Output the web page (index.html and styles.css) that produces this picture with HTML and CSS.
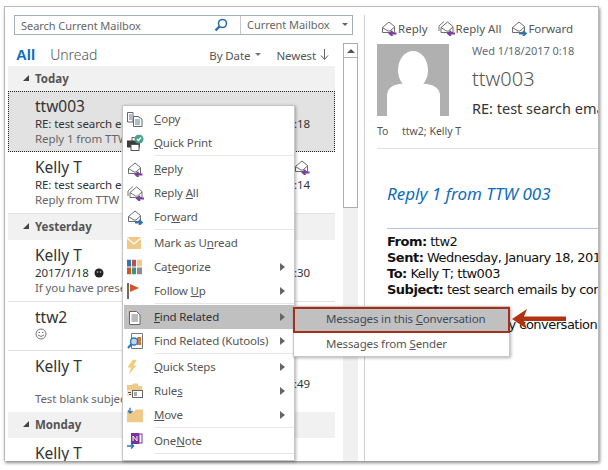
FILE: index.html
```html
<!DOCTYPE html>
<html lang="en">
<head>
<meta charset="utf-8">
<title>Outlook</title>
<link rel="stylesheet" href="styles.css">
</head>
<body>
<svg class="defs" width="0" height="0">
  <defs>
    <symbol id="env" viewBox="0 0 16 16"><path d="M1.500 7.500 L8 2 L13.500 6.500 V12.500 H1.500 Z M1.500 7.500 L7 11 H9 L13.500 7" fill="none" stroke="#6d6d6d" stroke-width="1"/></symbol>
    <symbol id="back" viewBox="0 0 16 16"><path d="M15.500 13.500 H9 M11.500 11 L8.500 13.500 L11.500 16" fill="none" stroke="#7b3f9e" stroke-width="1.800"/></symbol>
    <symbol id="fwd" viewBox="0 0 16 16"><path d="M8 13.500 H14.500 M12 11 L15 13.500 L12 16" fill="none" stroke="#2e75b6" stroke-width="1.800"/></symbol>
  </defs>
</svg>
<div class="window">
  <div class="left">
    <div class="search">
      <span class="search-text">Search Current Mailbox</span>
      <svg class="lens" width="14" height="14" viewBox="0 0 14 14"><circle cx="8.500" cy="5.500" r="4" fill="none" stroke="#2b6ea8" stroke-width="1.600"/><path d="M5.500 8.500 L1.500 12.500" stroke="#2b6ea8" stroke-width="2.400"/></svg>
      <span class="scope">Current Mailbox</span>
      <span class="scope-caret"></span>
    </div>
    <div class="body">
      <div class="list">
        <div class="filters">
          <span class="all">All</span>
          <span class="unread">Unread</span>
          <span class="sort bydate">By Date</span>
          <span class="caret"></span>
          <span class="sort newest">Newest</span>
          <svg class="down" width="9" height="12" viewBox="0 0 9 12"><path d="M4.500 0 V10 M1 6.500 L4.500 10.500 L8 6.500" fill="none" stroke="#666" stroke-width="1"/></svg>
        </div>
        <div class="group first"><span class="tri"></span>Today</div>
        <div class="row selected">
          <div class="name">ttw003</div>
          <div class="subj"><span>RE: test search emails by conversation</span><span>0:18</span></div>
          <div class="prev">Reply 1 from TTW 003</div>
        </div>
        <div class="row">
          <svg class="row-icon" width="16" height="16"><use href="#env"/><use href="#back"/></svg>
          <div class="name">Kelly T</div>
          <div class="subj"><span>RE: test search emails by conversation</span><span>0:14</span></div>
          <div class="prev">Reply from TTW 1</div>
        </div>
        <div class="group"><span class="tri"></span>Yesterday</div>
        <div class="row">
          <div class="name">Kelly T</div>
          <div class="subj"><span>2017/1/18 <svg class="face" width="10" height="10" viewBox="0 0 10 10"><circle cx="5" cy="5" r="4.500" fill="#222"/><circle cx="3.500" cy="4" r=".8" fill="#ccc"/><circle cx="6.500" cy="4" r=".8" fill="#ccc"/></svg></span><span>0:30</span></div>
          <div class="prev">If you have present</div>
        </div>
        <div class="row short">
          <div class="name">ttw2</div>
          <div class="subj"><svg class="smile" width="12" height="12" viewBox="0 0 12 12"><circle cx="6" cy="6" r="5" fill="none" stroke="#777"/><path d="M3 7 Q6 10 9 7 M3.500 4.500 H5 M7 4.500 H8.500" fill="none" stroke="#777"/></svg></div>
        </div>
        <div class="row tall">
          <div class="name">Kelly T</div>
          <div class="subj"><span>&nbsp;</span><span>0:49</span></div>
          <div class="prev">Test blank subject</div>
        </div>
        <div class="group"><span class="tri"></span>Monday</div>
        <div class="row">
          <div class="name">Kelly T</div>
        </div>
      </div>
      <div class="scrollbar">
        <div class="sb-up"><span></span></div>
        <div class="sb-thumb"></div>
      </div>
    </div>
  </div>
  <div class="pane">
    <div class="actions">
      <span class="action"><svg width="16" height="16"><use href="#env"/><use href="#back"/></svg>Reply</span>
      <span class="action"><svg width="17" height="16" viewBox="0 0 17 16"><path d="M1 6 L6 1.500 M1 6 V11" fill="none" stroke="#777"/><use href="#env" x="1"/><use href="#back" x="1"/></svg>Reply All</span>
      <span class="action"><svg width="16" height="16"><use href="#env"/><use href="#fwd"/></svg>Forward</span>
    </div>
    <div class="head">
      <svg class="avatar" width="72" height="72" viewBox="0 0 72 72"><rect width="72" height="72" fill="#b0b0b0"/><ellipse cx="36" cy="26" rx="15" ry="19" fill="#fff"/><path d="M10 72 V52 Q10 42 22 40 Q28 39 30 42 Q36 45 42 42 Q44 39 50 40 Q63 42 63 52 V72 Z" fill="#fff"/></svg>
      <div class="meta">
        <div class="date">Wed 1/18/2017 0:18</div>
        <div class="sender">ttw003</div>
        <div class="subject">RE: test search emails by conversation</div>
      </div>
    </div>
    <div class="to"><span class="to-label">To</span>ttw2; Kelly T</div>
    <div class="mail">
      <div class="greeting">Reply 1 from TTW 003</div>
      <div class="quoted">
        <div><b>From:</b> ttw2</div>
        <div><b>Sent:</b> Wednesday, January 18, 2017 0:18</div>
        <div><b>To:</b> Kelly T; ttw003</div>
        <div><b>Subject:</b> test search emails by conversation</div>
        <div class="quoted-body">test search emails by conversation</div>
      </div>
    </div>
  </div>

  <div class="menu">
    <div class="item">
      <svg class="ico" width="16" height="16" viewBox="0 0 16 16"><path d="M.5 1.500 H6 V11 H.5 Z M6.500 5.500 H11 L15 8 V15.500 H6.500 Z" fill="#fff" stroke="#666"/><path d="M2 4 H5 M2 6 H5 M2 8 H5 M8 9 H13 M8 11 H13 M8 13 H13" stroke="#4a7fb5"/></svg>
      <span><u>C</u>opy</span>
    </div>
    <div class="item">
      <svg class="ico" width="17" height="17" viewBox="0 0 17 17"><rect x="5" y="3" width="7" height="5" fill="#fff" stroke="#666"/><rect x="0" y="6" width="13" height="7" fill="#3c3c3c"/><rect x="4" y="10" width="8" height="6" fill="#fff" stroke="#555"/><circle cx="12" cy="4.500" r="4.500" fill="#4aa38a"/><path d="M10 4.500 L11.500 6 L14 3" fill="none" stroke="#fff" stroke-width="1.200"/></svg>
      <span><u>Q</u>uick Print</span>
    </div>
    <div class="sep"></div>
    <div class="item">
      <svg class="ico" width="16" height="16"><use href="#env"/><use href="#back"/></svg>
      <span><u>R</u>eply</span>
    </div>
    <div class="item">
      <svg class="ico" width="17" height="16" viewBox="0 0 17 16"><path d="M1 6 L6 1.500 M1 6 V11" fill="none" stroke="#777"/><use href="#env" x="1"/><use href="#back" x="1"/></svg>
      <span>Reply <u>A</u>ll</span>
    </div>
    <div class="item">
      <svg class="ico" width="16" height="16"><use href="#env"/><use href="#fwd"/></svg>
      <span>For<u>w</u>ard</span>
    </div>
    <div class="sep"></div>
    <div class="item">
      <svg class="ico" width="14" height="12" viewBox="0 0 14 12"><rect width="14" height="12" fill="#efc987"/><path d="M0 1 L7 7 L14 1" fill="none" stroke="#fff" stroke-width="1.200"/></svg>
      <span>Mark as U<u>n</u>read</span>
    </div>
    <div class="item">
      <svg class="ico" width="15" height="15" viewBox="0 0 15 15"><rect width="4" height="7" fill="#2e75b6"/><rect x="5" width="4" height="7" fill="#c0504d"/><rect x="10" width="5" height="7" fill="#efc987"/><rect y="8" width="4" height="7" fill="#c8572a"/><rect x="5" y="8" width="4" height="7" fill="#3f9478"/><rect x="10" y="8" width="5" height="7" fill="#8c8c8c"/></svg>
      <span>Ca<u>t</u>egorize</span>
      <i class="more"></i>
    </div>
    <div class="item">
      <svg class="ico" width="13" height="16" viewBox="0 0 13 16"><rect width="2" height="16" fill="#6b6b6b"/><path d="M3 1 L12 5 L3 9 Z" fill="#d0562a"/></svg>
      <span>Follow <u>U</u>p</span>
      <i class="more"></i>
    </div>
    <div class="sep"></div>
    <div class="item active">
      <svg class="ico" width="14" height="16" viewBox="0 0 14 16"><path d="M0 .5 H4 M.5 .5 V7" stroke="#efc987" fill="none"/><path d="M2.500 2.500 H9.500 L13 6 V15.500 H2.500 Z" fill="#fff" stroke="#666"/><path d="M4.500 6 H11 M4.500 8 H11 M4.500 10 H11 M4.500 12 H11" stroke="#777"/></svg>
      <span><u>F</u>ind Related</span>
      <i class="more"></i>
    </div>
    <div class="item">
      <svg class="ico" width="16" height="16" viewBox="0 0 16 16"><path d="M4.500 .5 H15.500 V15.500 H4.500 Z" fill="#fff" stroke="#777"/><rect x="10" y="4" width="4" height="8" fill="#d0793f"/><circle cx="7" cy="8.500" r="3.500" fill="#bcd6ea" stroke="#2e75b6" stroke-width="1.300"/><path d="M4.500 11 L1 15" stroke="#2e75b6" stroke-width="2"/></svg>
      <span>Find Related (Kutools)</span>
      <i class="more"></i>
    </div>
    <div class="sep"></div>
    <div class="item">
      <svg class="ico" width="10" height="15" viewBox="0 0 10 15"><path d="M6 0 H10 L6.500 6 H9.500 L2 15 L4 8 H0.500 Z" fill="#f0cc80"/></svg>
      <span><u>Q</u>uick Steps</span>
      <i class="more"></i>
    </div>
    <div class="item">
      <svg class="ico" width="16" height="16" viewBox="0 0 16 16"><path d="M0 2 H5 L6 .5 H11 V3 H15 V7 H0 Z" fill="#efc987"/><path d="M0 7 H6 V13 H0 Z" fill="#efc987" opacity=".5"/><rect x="5.500" y="7.500" width="10" height="7" fill="#fff" stroke="#666"/><path d="M7 10 H10 M7 12 H10 M1 9.500 H4 M2 11.500 H4" stroke="#555"/></svg>
      <span>Rule<u>s</u></span>
      <i class="more"></i>
    </div>
    <div class="item">
      <svg class="ico" width="16" height="15" viewBox="0 0 16 15"><path d="M0 4 H7 L9 2 H16 V15 H0 Z" fill="#efc987"/><path d="M3 0 V4.500 M1 3 L3 5.500 L5.500 3.500" fill="none" stroke="#2e75b6" stroke-width="1.300"/></svg>
      <span><u>M</u>ove</span>
      <i class="more"></i>
    </div>
    <div class="sep"></div>
    <div class="item">
      <svg class="ico" width="16" height="16" viewBox="0 0 16 16"><rect x="4" y="0" width="8" height="11" fill="#7a2f9a"/><rect x="12" y="1" width="3" height="9" fill="#fff" stroke="#7a2f9a"/><path d="M6 8 V3 L10 8 V3" fill="none" stroke="#fff"/><path d="M0 13 H6 M4 10.500 L6.500 13 L4 15.500" fill="none" stroke="#2e75b6" stroke-width="1.500"/></svg>
      <span>One<u>N</u>ote</span>
    </div>
    <div class="sep"></div>
    <div class="item">
      <svg class="ico" width="14" height="16" viewBox="0 0 14 16"><circle cx="7" cy="8" r="5" fill="none" stroke="#777" stroke-width="1.500"/></svg>
    </div>
  </div>

  <div class="submenu">
    <div class="subitem current">Messages in this <u>C</u>onversation</div>
    <div class="subitem">Messages from <u>S</u>ender</div>
  </div>

  <svg class="arrow" width="56" height="22" viewBox="0 0 56 22"><path d="M0 11 L15 1 L12 8.500 H54 V13 H12 L15 21 Z" fill="#b1320f"/></svg>
</div>
</body>
</html>
```

FILE: styles.css
```css
* { box-sizing: border-box; }
html, body { margin: 0; padding: 0; background: #fff; }
body { font-family: "Noto Sans", "Open Sans", sans-serif; color: #444; height: 470px; overflow: hidden; }
.defs { position: absolute; }
u { text-decoration: underline; text-underline-offset: 1px; }

.window { position: relative; margin: 6px 0 0 4px; width: 595px; height: 455px; display: flex; background: #fff; border: 1px solid #b9b9b9; border-bottom: 0; box-shadow: 1px 2px 3px rgba(0,0,0,.45); overflow: visible; }

.left { width: 359px; flex: none; padding-top: 8px; display: flex; flex-direction: column; height: 454px; overflow: hidden; }
.search { margin: 0 11px 0 9px; height: 20px; border: 1px solid #a6aeb8; display: flex; align-items: center; font-size: 11px; color: #666; position: relative; letter-spacing: -.05px; white-space: nowrap; }
.search-text { margin-left: 6px; width: 193px; }
.lens { margin-right: 12px; }
.scope { border-left: 1px solid #c5c9ce; height: 18px; line-height: 17px; padding-left: 6px; flex: 1; }
.scope-caret { position: absolute; right: 4px; top: 7px; border: 3px solid transparent; border-top: 3px solid #666; }

.body { display: flex; margin-top: 8px; flex: 1; min-height: 0; }
.list { margin-left: 3px; width: 327px; flex: none; }
.filters { height: 23px; display: flex; align-items: center; padding-right: 6px; white-space: nowrap; }
.all { font: bold 15px "Liberation Sans", sans-serif; color: #0f6cbd; margin-left: 8px; }
.unread { font-size: 14px; color: #555; margin-left: 15px; font-weight: 300; }
.sort { font-size: 11.500px; color: #555; padding-top: 2px; letter-spacing: -.1px; }
.bydate { margin-left: auto; }
.caret { border: 3px solid transparent; border-top: 3px solid #777; margin: 2px 0 0 5px; }
.newest { margin-left: 15px; }
.down { margin-left: 4px; }

.group { height: 26px; background: #f1f1f1; font-size: 11.500px; font-weight: 700; color: #555; display: flex; align-items: center; padding: 0 0 2px 15px; }
.group.first { height: 25px; padding-bottom: 1px; }
.tri { width: 0; height: 0; border-style: solid; border-width: 0 0 6px 6px; border-color: transparent transparent #444 transparent; margin-right: 6px; }

.row { position: relative; height: 62px; padding: 5px 25px 0 27px; border-bottom: 1px solid #e1e1e1; }
.row.selected { height: 61px; background: #e2e2e2; border: 1px dotted #222; padding: 4px 24px 0 26px; }
.row.short { height: 49px; }
.row.tall { height: 61px; border-bottom: 0; }
.name { font-size: 15.500px; line-height: 20px; color: #333; }
.subj { font-size: 11.500px; line-height: 15px; color: #333; display: flex; justify-content: space-between; white-space: nowrap; letter-spacing: -.1px; }
.prev { font-size: 11.500px; line-height: 15px; color: #666; white-space: nowrap; letter-spacing: -.1px; }
.row-icon { position: absolute; right: 25px; top: 7px; }
.face { vertical-align: -1px; margin-left: 2px; }
.smile { display: block; margin-top: 1px; }

.scrollbar { width: 15px; margin-left: 8px; background: #f0f0f0; flex: none; height: 418px; }
.sb-up { height: 15px; background: #fff; border: 1px solid #a6aeb8; display: flex; align-items: center; justify-content: center; }
.sb-up span { border: 4px solid transparent; border-bottom: 4px solid #555; border-top: 0; }
.sb-thumb { height: 150px; background: #fff; border: 1px solid #a6aeb8; border-top: 0; }

.pane { flex: 1; min-width: 0; border-left: 1px solid #d0d0d0; margin: 8px 0 0 0; padding-left: 12px; overflow: hidden; }
.actions { display: flex; height: 28px; margin-left: 4px; padding-top: 5px; font-size: 11.500px; color: #555; white-space: nowrap; }
.action { display: flex; align-items: center; height: 16px; margin-right: 10px; gap: 1px; }
.head { display: flex; margin-top: 1px; }
.avatar { flex: none; }
.meta { margin-left: 23px; white-space: nowrap; }
.date { font-size: 11px; color: #5f6b7a; line-height: 14px; letter-spacing: -.03px; }
.sender { font-size: 20px; font-weight: 300; color: #555; line-height: 28px; margin-top: 7px; }
.subject { font-size: 14.500px; color: #333; line-height: 18px; margin-top: 6px; }
.to { font-size: 10.500px; color: #555; margin-top: 7px; height: 25px; line-height: 15px; border-bottom: 1px solid #e1e1e1; white-space: nowrap; }
.to-label { display: inline-block; width: 25px; }
.mail { padding-left: 10px; white-space: nowrap; }
.greeting { font-style: italic; font-size: 17px; color: #0f6cbd; margin-top: 34px; line-height: 22px; height: 46px; border-bottom: 1px solid #b4c6e7; }
.quoted { margin-top: 5px; font: 13px/16px "DejaVu Sans", sans-serif; color: #111; letter-spacing: -.5px; }
.quoted-body { margin-top: 19px; }

.menu { position: absolute; left: 117px; top: 98px; width: 173px; height: 356px; background: #fff; border: 1px solid #c6c6c6; box-shadow: 1px 1px 3px rgba(0,0,0,.3); padding: 1px 0 0 1px; overflow: hidden; font-size: 11.500px; letter-spacing: -.15px; color: #555; }
.item { position: relative; height: 24px; display: flex; align-items: center; padding: 0 0 2px 30px; white-space: nowrap; }
.ico { position: absolute; left: 3px; top: 50%; transform: translateY(-50%); }
.item.active { background: #c0c0c0; color: #333; }
.more { position: absolute; right: 9px; top: 8px; border: 4px solid transparent; border-left: 5px solid #666; border-right: 0; }
.sep { height: 2px; margin-left: 31px; background: #e6e6e6; border-bottom: 1px solid #fff; }

.submenu { position: absolute; left: 288px; top: 299px; width: 217px; height: 51px; background: #fff; border: 1px solid #c6c6c6; box-shadow: 1px 1px 3px rgba(0,0,0,.3); padding-top: 1px; font-size: 11.500px; letter-spacing: -.15px; color: #555; }
.subitem { height: 24px; line-height: 21px; padding-left: 32px; white-space: nowrap; }
.subitem.current { height: 26px; line-height: 20px; margin: -1px -1px 0 -1px; background: #c0c0c0; border: 2.500px solid #a5301a; padding-left: 31px; color: #3c4a5a; }
.arrow { position: absolute; left: 507px; top: 301px; }
```
